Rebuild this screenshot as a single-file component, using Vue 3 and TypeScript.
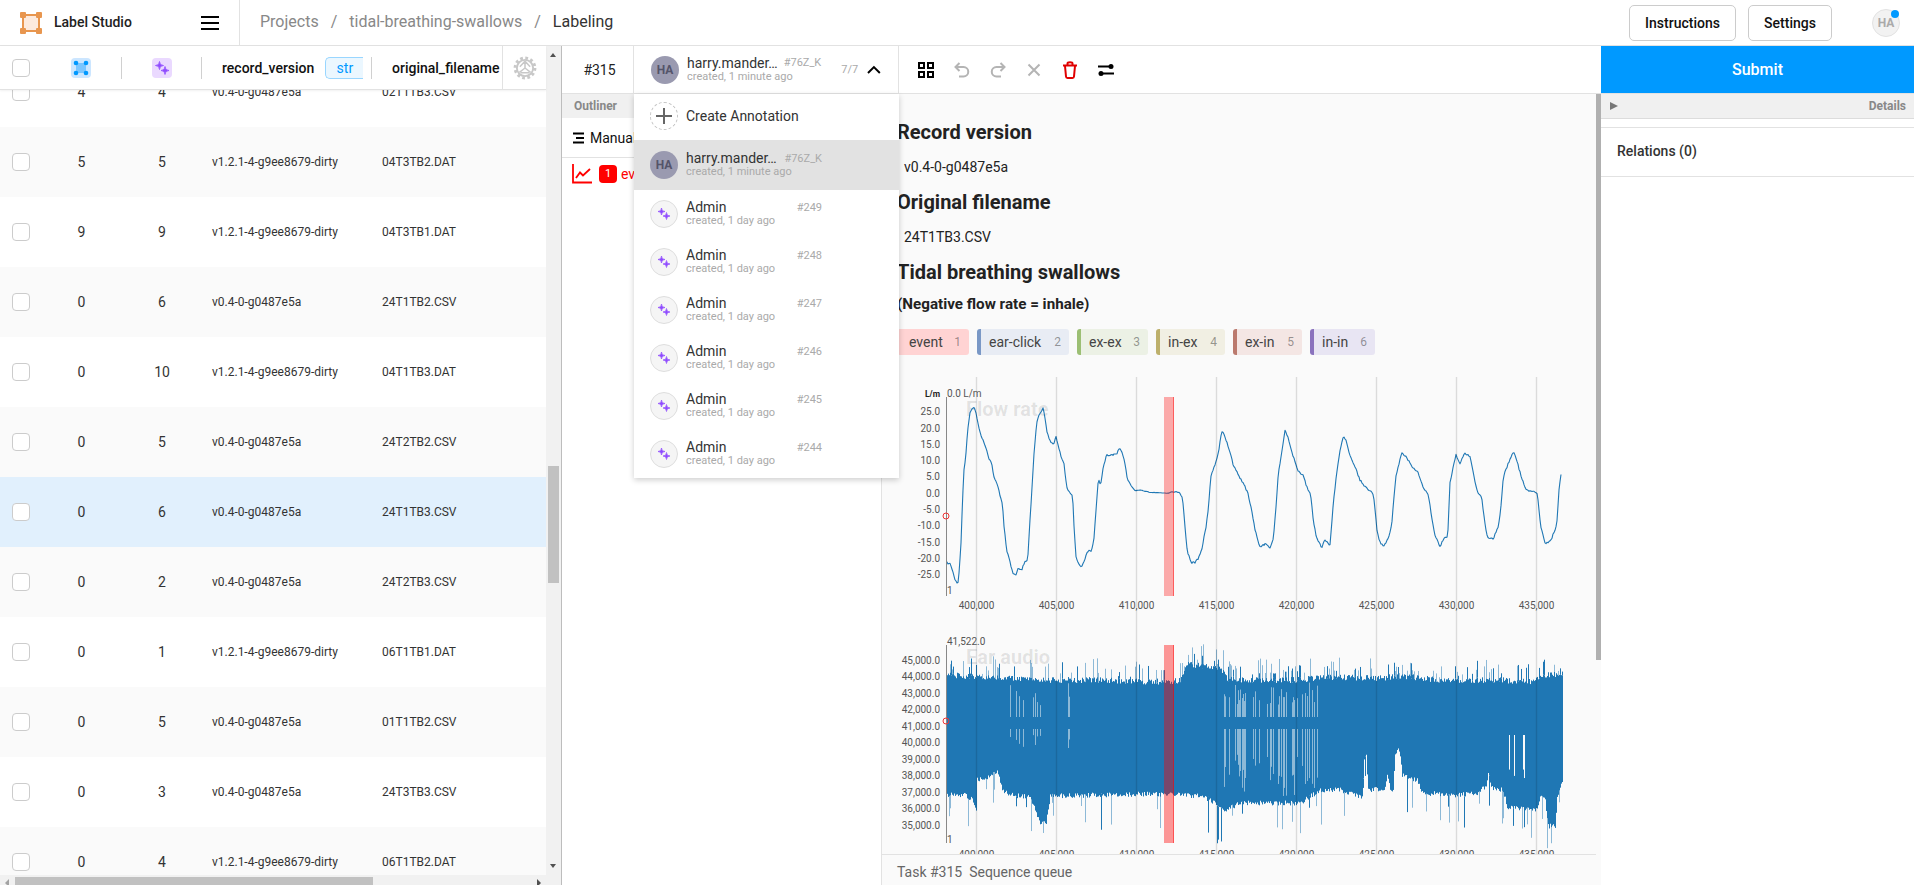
<script setup lang="ts">
type Pt = [number, number]

const rows = [
  { a: 4, b: 4, v: 'v0.4-0-g0487e5a', f: '02T1TB3.CSV' },
  { a: 5, b: 5, v: 'v1.2.1-4-g9ee8679-dirty', f: '04T3TB2.DAT' },
  { a: 9, b: 9, v: 'v1.2.1-4-g9ee8679-dirty', f: '04T3TB1.DAT' },
  { a: 0, b: 6, v: 'v0.4-0-g0487e5a', f: '24T1TB2.CSV' },
  { a: 0, b: 10, v: 'v1.2.1-4-g9ee8679-dirty', f: '04T1TB3.DAT' },
  { a: 0, b: 5, v: 'v0.4-0-g0487e5a', f: '24T2TB2.CSV' },
  { a: 0, b: 6, v: 'v0.4-0-g0487e5a', f: '24T1TB3.CSV', sel: true },
  { a: 0, b: 2, v: 'v0.4-0-g0487e5a', f: '24T2TB3.CSV' },
  { a: 0, b: 1, v: 'v1.2.1-4-g9ee8679-dirty', f: '06T1TB1.DAT' },
  { a: 0, b: 5, v: 'v0.4-0-g0487e5a', f: '01T1TB2.CSV' },
  { a: 0, b: 3, v: 'v0.4-0-g0487e5a', f: '24T3TB3.CSV' },
  { a: 0, b: 4, v: 'v1.2.1-4-g9ee8679-dirty', f: '06T1TB2.DAT' },
]
const admins = ['#249', '#248', '#247', '#246', '#245', '#244']
const chips = [
  { t: 'event', k: 1, bg: '#ffd3d3', bd: '#ffd3d3', w: 72 },
  { t: 'ear-click', k: 2, bg: '#e8ecf4', bd: '#7a98c6', w: 92 },
  { t: 'ex-ex', k: 3, bg: '#ecf1e5', bd: '#9cbf74', w: 71 },
  { t: 'in-ex', k: 4, bg: '#f1efe3', bd: '#bdb06c', w: 69 },
  { t: 'ex-in', k: 5, bg: '#f4e6e4', bd: '#bb7a6e', w: 69 },
  { t: 'in-in', k: 6, bg: '#e8e5f3', bd: '#8a72bd', w: 65 },
]

function rng(seed: number) {
  let s = seed
  return () => {
    s = (s + 0x6d2b79f5) | 0
    let t = Math.imul(s ^ (s >>> 15), 1 | s)
    t = (t + Math.imul(t ^ (t >>> 7), 61 | t)) ^ t
    return ((t ^ (t >>> 14)) >>> 0) / 4294967296
  }
}

const z5: Pt[] = [[168,578],[180,580],[186,598],[195,628],[203,645],[208,600],[213,520],[218,380],[222,300],[228,250],[232,190],[240,130],[248,112],[256,118],[262,150],[270,185],[280,215],[288,235],[295,262],[305,280],[312,320],[322,345],[330,375],[338,408],[342,470],[350,540],[358,565],[368,610],[378,612],[385,592],[395,600],[405,575],[413,570],[418,480],[425,370],[432,250],[440,160],[450,128],[460,115],[466,150],[472,190],[482,215],[492,222],[497,195],[505,230],[513,258],[522,280],[530,350],[540,370],[548,375],[552,470],[558,560],[565,582],[575,592],[585,570],[592,542],[604,545],[612,505],[618,420],[625,325],[632,345],[640,290],[650,255],[660,255],[680,252],[688,232],[697,250],[705,280],[712,325],[722,345],[735,362],[750,360],[780,367],[810,368],[835,370],[845,365],[870,368],[878,385],[884,460],[892,545],[905,578],[915,578],[925,565],[935,540],[948,470],[955,420],[962,320],[975,285],[985,250],[995,182],[1005,200],[1015,230],[1030,285],[1045,315],[1065,350],[1075,375],[1085,420],[1095,480],[1110,532],[1125,522],[1140,532],[1150,505],[1158,410],[1165,310],[1175,250],[1185,180],[1195,205],[1205,245],[1225,305],[1240,315],[1250,350],[1262,375],[1270,450],[1280,505],[1295,533],[1305,510],[1320,525],[1330,400],[1340,310],[1350,240],[1360,198],[1368,210],[1378,250],[1395,290],[1410,330],[1425,350],[1450,372]]
const z9: Pt[] = [[225,420],[232,490],[240,517],[252,527],[265,505],[275,465],[282,380],[288,320],[296,285],[305,250],[318,258],[335,290],[355,310],[368,350],[385,372],[395,440],[405,495],[420,530],[432,505],[443,500],[450,340],[458,300],[468,255],[480,280],[493,248],[510,258],[520,310],[532,365],[545,380],[552,440],[562,503],[580,505],[595,470],[602,420],[610,320],[625,280],[640,245],[650,270],[665,325],[680,362],[712,368],[722,470],[735,518],[745,520],[755,505],[770,465],[777,360],[785,300]]

const flowPts: Pt[] = [
  ...z5.map(([x, y]): Pt => [890 + x / 3, 370 + y / 3]),
  ...z9.map(([x, y]): Pt => [1300 + x / 3, 370 + y / 3]),
]

function lerp(pts: Pt[], x: number) {
  for (let i = 1; i < pts.length; i++) {
    if (x <= pts[i][0]) {
      const [x0, y0] = pts[i - 1]
      const [x1, y1] = pts[i]
      return y0 + ((y1 - y0) * (x - x0)) / Math.max(x1 - x0, 0.001)
    }
  }
  return pts[pts.length - 1][1]
}

const flowPath = (() => {
  const r = rng(7)
  let d = ''
  for (let x = 946; x <= 1561.7; x += 1) {
    const amp = x > 1130 && x < 1176 ? 0.5 : 1.9
    const y = lerp(flowPts, x) + (r() - 0.5) * amp
    d += `${d ? 'L' : 'M'}${x.toFixed(2)} ${y.toFixed(2)}`
  }
  return d
})()

const topEnv: Pt[] = [[946,675],[1000,678],[1050,680],[1100,680],[1160,682],[1175,682],[1180,680],[1188,664],[1200,666],[1220,668],[1226,678],[1240,680],[1300,680],[1320,677],[1380,678],[1400,676],[1440,680],[1500,680],[1530,682],[1545,675],[1562,674]]
const botEnv: Pt[] = [[946,795],[965,795],[972,800],[976,812],[977,780],[990,776],[998,772],[1002,790],[1010,795],[1030,797],[1035,810],[1040,822],[1046,822],[1050,796],[1150,794],[1200,796],[1210,800],[1225,810],[1240,803],[1300,803],[1320,790],[1340,790],[1350,794],[1362,797],[1364,757],[1366,757],[1368,790],[1385,788],[1387,773],[1390,790],[1393,792],[1395,753],[1399,750],[1402,775],[1417,780],[1422,793],[1455,795],[1478,793],[1486,785],[1488,773],[1491,788],[1503,790],[1507,808],[1527,808],[1537,810],[1541,795],[1545,800],[1548,826],[1555,826],[1557,795],[1562,783]]

const audio = (() => {
  const r = rng(42)
  let solid = ''
  let soft = ''
  for (let x = 946; x <= 1562; x++) {
    const px = x + 0.5
    const top = lerp(topEnv, x) + (r() - 0.5) * 6
    const bot = lerp(botEnv, x) + (r() - 0.5) * 5
    const spikeT = r()
    if (spikeT < 0.16) soft += `M${px} ${top - 4 - r() * 16}V${top}`
    else if (spikeT < 0.26) solid += `M${px} ${top - 3 - r() * 14}V${top}`
    const spikeB = r()
    if (spikeB < 0.07) soft += `M${px} ${bot}V${bot + 8 + r() * 26}`
    else if (spikeB < 0.12) solid += `M${px} ${bot}V${bot + 8 + r() * 30}`
    const inA = x > 1000 && x < 1042
    const inB = x > 1060 && x < 1074
    const inC = x > 1222 && x < 1320
    const inD = x > 1507 && x < 1532
    const g = r()
    if ((inA && g < 0.1) || (inB && g < 0.14) || (inC && g < 0.3)) {
      const upEnd = top + 4 + r() * 20
      const lowEnd = inC ? bot - 8 - r() * 40 : 735 + r() * 20
      solid += `M${px} ${top}V${upEnd}M${px} 717V729M${px} ${lowEnd}V${bot}`
      soft += `M${px} ${upEnd}V717M${px} 729V${lowEnd}`
    } else if (inD && g < 0.12) {
      solid += `M${px} ${top}V735M${px} ${760 + r() * 20}V${bot}`
    } else {
      solid += `M${px} ${top}V${bot}`
    }
  }
  return { solid, soft }
})()

const flowTicks = [25, 20, 15, 10, 5, 0, -5, -10, -15, -20, -25].map((v) => ({
  y: 411.7 + (25 - v) * 3.26,
  t: v.toFixed(1),
}))
const audioTicks = [45, 44, 43, 42, 41, 40, 39, 38, 37, 36, 35].map((v) => ({
  y: 660 + (45 - v) * 16.5,
  t: `${v},000.0`,
}))
const grid = [0, 1, 2, 3, 4, 5, 6, 7].map((i) => ({
  x: 976.5 + 80 * i,
  t: `${400 + 5 * i},000`,
}))
</script>

<template>
  <div class="app">
    <header class="topnav">
      <div class="brand">
        <svg class="logo" width="22" height="22" viewBox="0 0 22 22">
          <rect x="3" y="3" width="16" height="16" fill="#fdeadd" stroke="#e8964f" stroke-width="2" />
          <rect x="0" y="0" width="6" height="6" rx="1" fill="#e8964f" />
          <rect x="16" y="0" width="6" height="6" rx="1" fill="#e8964f" />
          <rect x="0" y="16" width="6" height="6" rx="1" fill="#e8964f" />
          <rect x="16" y="16" width="6" height="6" rx="1" fill="#e8964f" />
        </svg>
        <span class="brand-name">Label Studio</span>
        <svg class="burger" width="18" height="14" viewBox="0 0 18 14">
          <path d="M0 1h18M0 7h18M0 13h18" stroke="#000" stroke-width="2" />
        </svg>
      </div>
      <nav class="crumbs">
        <span>Projects</span><i>/</i><span>tidal-breathing-swallows</span><i>/</i><span class="cur">Labeling</span>
      </nav>
      <div class="nav-right">
        <button class="btn btn-ins">Instructions</button>
        <button class="btn btn-set">Settings</button>
        <div class="me">HA<b class="dot"></b></div>
      </div>
    </header>

    <div class="body">
      <section class="table-pane">
        <div class="table-col">
          <div class="thead">
            <div class="tc"><span class="check"></span></div>
            <div class="tc sep center">
              <svg width="20" height="20" viewBox="0 0 20 20">
                <rect width="20" height="20" rx="4" fill="#cce6ff" />
                <rect x="5" y="5" width="10" height="10" fill="#7cc6ff" />
                <circle cx="5" cy="5" r="2.3" fill="#0099ff" /><circle cx="15" cy="5" r="2.3" fill="#0099ff" />
                <circle cx="5" cy="15" r="2.3" fill="#0099ff" /><circle cx="15" cy="15" r="2.3" fill="#0099ff" />
              </svg>
            </div>
            <div class="tc sep center">
              <svg width="20" height="20" viewBox="0 0 20 20">
                <rect width="20" height="20" rx="4" fill="#ead9ff" />
                <path d="M7.5 3.5Q7.5 7.5 11.5 7.5Q7.5 7.5 7.5 11.5Q7.5 7.5 3.5 7.5Q7.5 7.5 7.5 3.5Z" fill="#8f4bff" stroke="#8f4bff" stroke-width=".8" />
                <path d="M13 8.5Q13 12.5 17 12.5Q13 12.5 13 16.5Q13 12.5 9 12.5Q13 12.5 13 8.5Z" fill="#8f4bff" stroke="#8f4bff" stroke-width=".8" />
              </svg>
            </div>
            <div class="tc sep name-cell">
              <span class="colname">record_version</span>
              <span class="str">str</span>
            </div>
            <div class="tc name-cell"><span class="colname">original_filename</span></div>
            <div class="tc gear-cell">
              <svg width="24" height="24" viewBox="0 0 28 28" fill="none" stroke="#c8c8c8">
                <circle cx="14" cy="14" r="11.500" stroke-width="3.6" stroke-dasharray="3.200 2.820" />
                <circle cx="14" cy="14" r="9.500" stroke-width="2.200" />
                <path d="M14 6L14 14M14 14L7.500 19M14 14L20.500 19M8 12.500L14 6L20 12.500M9 19.500h10" stroke-width="1.800" />
              </svg>
            </div>
          </div>
          <div class="rows-view">
            <div class="rows">
              <div
                v-for="(r, i) in rows"
                :key="i"
                class="row"
                :class="{ alt: i % 2 === 1, sel: r.sel }"
              >
                <div class="tc"><span class="check"></span></div>
                <div class="num">{{ r.a }}</div>
                <div class="num">{{ r.b }}</div>
                <div class="txt">{{ r.v }}</div>
                <div class="txt">{{ r.f }}</div>
              </div>
            </div>
          </div>
          <div class="hscroll">
            <i class="arr-l"></i>
            <b class="hthumb"></b>
            <i class="arr-r"></i>
          </div>
        </div>
        <div class="vscroll">
          <i class="arr-u"></i>
          <b class="vthumb"></b>
          <i class="arr-d"></i>
        </div>
      </section>

      <section class="lab">
        <div class="lab-top">
          <div class="task-id">#315</div>
          <div class="annot">
            <div class="ava ha">HA</div>
            <div class="who">
              <div class="who-line">
                <span class="nm">harry.mander…</span>
                <span class="idn">#76Z_K</span>
              </div>
              <div class="ago">created, 1 minute ago</div>
            </div>
            <span class="count">7/7</span>
            <svg width="14" height="9" viewBox="0 0 14 9">
              <path d="M1 8L7 2L13 8" fill="none" stroke="#000" stroke-width="2" />
            </svg>
          </div>
          <div class="tools">
            <svg width="16" height="16" viewBox="0 0 16 16" fill="none" stroke="#000" stroke-width="2">
              <rect x="1" y="1" width="5" height="5" /><rect x="10" y="1" width="5" height="5" />
              <rect x="1" y="10" width="5" height="5" /><rect x="10" y="10" width="5" height="5" />
            </svg>
            <svg width="16" height="16" viewBox="0 0 16 16" fill="none" stroke="#b4b4b4" stroke-width="2">
              <path d="M5.500 1L1.500 5L5.500 9M2 5H9.500a4.600 4.600 0 0 1 0 9.500H5" />
            </svg>
            <svg width="16" height="16" viewBox="0 0 16 16" fill="none" stroke="#b4b4b4" stroke-width="2">
              <path d="M10.500 1L14.500 5L10.500 9M14 5H6.500a4.600 4.600 0 0 0 0 9.500H11" />
            </svg>
            <svg width="16" height="16" viewBox="0 0 16 16" fill="none" stroke="#b4b4b4" stroke-width="2">
              <path d="M2.500 2.500L13.500 13.500M13.500 2.500L2.500 13.500" />
            </svg>
            <svg width="16" height="18" viewBox="0 0 16 18" fill="none" stroke="#e00000" stroke-width="2">
              <path d="M1 4.500H15M5.500 4.500V2.500Q5.500 1.200 8 1.200Q10.500 1.200 10.500 2.500V4.500M3 5L4 15.500Q4.100 17 5.500 17H10.500Q11.900 17 12 15.500L13 5" />
            </svg>
            <svg width="16" height="16" viewBox="0 0 16 16">
              <path d="M0 4.500H13M3 11.500H16" stroke="#000" stroke-width="2" />
              <circle cx="13" cy="4.500" r="2.500" /><circle cx="3" cy="11.500" r="2.500" />
            </svg>
          </div>
          <button class="submit">Submit</button>
        </div>

        <div class="work">
          <div class="outliner">
            <div class="tab">Outliner</div>
            <div class="manual">
              <svg width="11" height="12" viewBox="0 0 11 12">
                <path d="M0 1.500H11M3 6H11M0 10.500H11" stroke="#000" stroke-width="2" />
              </svg>
              <span>Manual</span>
            </div>
            <div class="region">
              <svg width="20" height="20" viewBox="0 0 20 20" fill="none" stroke="#ff0000" stroke-width="1.800">
                <path d="M1 0V18.500H20" />
                <path d="M4 14L8 8.500L11 11.500L18 5" />
              </svg>
              <span class="reg-badge">1</span>
              <span class="reg-name">event</span>
            </div>
          </div>

          <div class="content">
            <div class="doc">
              <h2 class="h">Record version</h2>
              <p class="val">v0.4-0-g0487e5a</p>
              <h2 class="h">Original filename</h2>
              <p class="val">24T1TB3.CSV</p>
              <h2 class="h">Tidal breathing swallows</h2>
              <h3 class="sub">(Negative flow rate = inhale)</h3>
              <div class="chips">
                <span
                  v-for="c in chips"
                  :key="c.k"
                  class="chip"
                  :style="{ background: c.bg, borderLeftColor: c.bd, width: c.w + 'px' }"
                >{{ c.t }}<em>{{ c.k }}</em></span>
              </div>
            </div>
            <svg class="plot" width="714" height="482" viewBox="882 372 714 482">
              <text x="966" y="416" class="wm">Flow rate</text>
              <text x="966" y="664" class="wm">Ear audio</text>

              <path :d="flowPath" fill="none" stroke="#1f77b4" stroke-width="1.100" stroke-linejoin="round" />
              <path :d="audio.soft" stroke="#1f77b4" stroke-opacity=".5" fill="none" />
              <path :d="audio.solid" stroke="#1f77b4" fill="none" />

              <line v-for="g in grid" :key="g.x" :x1="g.x" :x2="g.x" y1="377" y2="854" stroke="#000" stroke-opacity=".12" stroke-width="1.400" />

              <path d="M946.500 397V596M946.500 645V843" stroke="#888" fill="none" />
              <text x="925" y="397" class="unit">L/m</text>
              <text x="947" y="397" class="tick">0.0 L/m</text>
              <text x="947" y="594" class="tick">1</text>
              <text x="947" y="645" class="tick">41,522.0</text>
              <text x="947" y="843" class="tick">1</text>

              <text v-for="t in flowTicks" :key="t.t" x="940" :y="t.y + 3.500" class="tick end">{{ t.t }}</text>
              <text v-for="t in audioTicks" :key="t.t" x="940" :y="t.y + 3.500" class="tick end">{{ t.t }}</text>
              <template v-for="g in grid" :key="g.t">
                <text :x="g.x" y="609" class="tick mid">{{ g.t }}</text>
                <text :x="g.x" y="858" class="tick mid">{{ g.t }}</text>
              </template>

              <rect x="1164" y="397" width="10" height="199" fill="#ff0000" fill-opacity=".32" />
              <rect x="1164" y="645" width="10" height="198" fill="#ff0000" fill-opacity=".4" />
              <path d="M1173.500 397V596M1173.500 645V843" stroke="#ff0000" stroke-opacity=".45" fill="none" />
              <circle cx="946" cy="516" r="3" fill="none" stroke="#e33" />
              <circle cx="946" cy="721" r="3" fill="none" stroke="#e33" />
            </svg>
            <div class="foot">Task #315&nbsp; Sequence queue</div>
            <b class="content-thumb"></b>
          </div>

          <aside class="side">
            <div class="side-tab">
              <i class="tri"></i>
              <span>Details</span>
            </div>
            <div class="side-gap"></div>
            <div class="rel">Relations (0)</div>
          </aside>

          <div class="dropdown">
            <div class="dd-create">
              <div class="ava plus">
                <svg width="16" height="16" viewBox="0 0 16 16">
                  <path d="M8 0V16M0 8H16" stroke="#666" stroke-width="2" />
                </svg>
              </div>
              <span class="nm">Create Annotation</span>
            </div>
            <div class="dd-item dd-sel">
              <div class="ava ha">HA</div>
              <div class="who">
                <div class="who-line">
                  <span class="nm">harry.mander…</span>
                  <span class="idn">#76Z_K</span>
                </div>
                <div class="ago">created, 1 minute ago</div>
              </div>
            </div>
            <div v-for="a in admins" :key="a" class="dd-item">
              <div class="ava bot">
                <svg width="14" height="14" viewBox="0 0 14 14" fill="#8f4bff" stroke="#8f4bff" stroke-width=".7">
                  <path d="M4.500 1Q4.500 4.500 8 4.500Q4.500 4.500 4.500 8Q4.500 4.500 1 4.500Q4.500 4.500 4.500 1Z" />
                  <path d="M9.500 5.500Q9.500 9 13 9Q9.500 9 9.500 12.500Q9.500 9 6 9Q9.500 9 9.500 5.500Z" />
                </svg>
              </div>
              <div class="who">
                <div class="who-line">
                  <span class="nm">Admin</span>
                  <span class="idn">{{ a }}</span>
                </div>
                <div class="ago">created, 1 day ago</div>
              </div>
            </div>
          </div>
        </div>
      </section>
    </div>
  </div>
</template>

<style>
html,
body {
  margin: 0;
  background: #fff;
  overflow: hidden;
}
</style>

<style scoped>
.app {
  width: 1914px;
  height: 885px;
  display: flex;
  flex-direction: column;
  overflow: hidden;
  font-family: Roboto, "Liberation Sans", sans-serif;
  color: #222;
  font-size: 14px;
}
.topnav {
  height: 45px;
  flex: none;
  display: flex;
  align-items: center;
  border-bottom: 1px solid #e2e2e2;
  box-sizing: content-box;
}
.brand {
  width: 240px;
  height: 45px;
  flex: none;
  display: flex;
  align-items: center;
  padding-left: 20px;
  box-sizing: border-box;
  border-right: 1px solid #e2e2e2;
}
.brand-name {
  margin-left: 12px;
  margin-top: -1px;
  font-size: 14px;
  font-weight: 500;
  color: #222;
  width: 60px;
  white-space: nowrap;
  flex: 1;
}
.burger {
  margin-right: 20px;
}
.crumbs {
  margin-left: 20px;
  padding-bottom: 2px;
  display: flex;
  align-items: center;
  font-size: 16px;
  color: #888;
  white-space: nowrap;
}
.crumbs i {
  font-style: normal;
  margin: 0 12px;
}
.crumbs .cur {
  color: #333;
}
.nav-right {
  margin-left: auto;
  display: flex;
  align-items: center;
}
.btn {
  height: 36px;
  background: #fff;
  border: 1px solid #ccc;
  border-radius: 5px;
  font: 500 14px Roboto, sans-serif;
  color: #111;
  padding: 0;
}
.btn-ins {
  width: 107px;
}
.btn-set {
  width: 84px;
  margin-left: 12px;
}
.me {
  position: relative;
  width: 28px;
  height: 28px;
  margin: 0 14px 0 40px;
  border-radius: 50%;
  background: #f2f2f2;
  border: 1px solid #e2e2e2;
  box-sizing: border-box;
  display: flex;
  align-items: center;
  justify-content: center;
  font-size: 12px;
  font-weight: 700;
  color: #aaa;
}
.dot {
  position: absolute;
  width: 8px;
  height: 8px;
  border-radius: 50%;
  background: #0099ff;
  top: 0;
  right: 0;
}
.body {
  flex: 1;
  display: flex;
  min-height: 0;
}
.table-pane {
  width: 562px;
  flex: none;
  display: flex;
  border-right: 1px solid #bdbdbd;
  box-sizing: border-box;
}
.table-col {
  width: 546px;
  flex: none;
  display: flex;
  flex-direction: column;
}
.thead {
  height: 44px;
  flex: none;
  display: grid;
  grid-template-columns: 41px 81px 80px 170px 130px 44px;
  background: #fff;
  border-bottom: 1px solid #e2e2e2;
  box-sizing: border-box;
  box-shadow: 0 1px 2px rgba(0, 0, 0, 0.06);
  position: relative;
  z-index: 2;
  align-items: center;
}
.tc {
  display: flex;
  align-items: center;
  min-width: 0;
}
.check {
  width: 18px;
  height: 18px;
  margin-left: 12px;
  box-sizing: border-box;
  border: 1px solid #ccc;
  border-radius: 4px;
  background: #fff;
  flex: none;
}
.sep {
  height: 22px;
  border-right: 1px solid #d0d0d0;
}
.center {
  justify-content: center;
}
.name-cell {
  padding-left: 20px;
  overflow: hidden;
  white-space: nowrap;
  height: 22px;
}
.colname {
  font-size: 14px;
  font-weight: 500;
  color: #111;
  flex: none;
}
.str {
  margin-left: 11px;
  height: 22px;
  width: 38px;
  flex: none;
  box-sizing: border-box;
  border: 1px solid #99d6ff;
  border-right: none;
  border-radius: 5px 0 0 5px;
  background: #ebf7ff;
  color: #0099ff;
  text-align: center;
  line-height: 20px;
  font-size: 14px;
}
.gear-cell {
  height: 43px;
  justify-content: center;
  border-left: 1px solid #e2e2e2;
}
.rows-view {
  flex: 1;
  min-height: 0;
  overflow: hidden;
}
.rows {
  margin-top: -33px;
}
.row {
  height: 70px;
  display: grid;
  grid-template-columns: 41px 81px 80px 170px 1fr;
  align-items: center;
  background: #fff;
}
.row.alt {
  background: #fafafa;
}
.row.sel {
  background: #e1f0fd;
}
.num {
  text-align: center;
  font-size: 14px;
  color: #333;
}
.txt {
  padding-left: 10px;
  font-size: 12px;
  color: #333;
  white-space: nowrap;
}
.hscroll {
  height: 10px;
  flex: none;
  background: #f1f1f1;
  position: relative;
}
.hthumb {
  position: absolute;
  left: 15px;
  top: 2px;
  width: 358px;
  height: 8px;
  background: #c1c1c1;
}
.arr-l,
.arr-r {
  position: absolute;
  top: 4px;
  width: 0;
  height: 0;
  border-top: 4px solid transparent;
  border-bottom: 4px solid transparent;
}
.arr-l {
  left: 5px;
  border-right: 4px solid #a3a3a3;
}
.arr-r {
  right: 5px;
  border-left: 4px solid #505050;
}
.vscroll {
  width: 15px;
  flex: none;
  background: #f1f1f1;
  position: relative;
}
.vthumb {
  position: absolute;
  left: 2px;
  width: 11px;
  top: 420px;
  height: 117px;
  background: #c1c1c1;
}
.arr-u,
.arr-d {
  position: absolute;
  left: 4px;
  width: 0;
  height: 0;
  border-left: 3.5px solid transparent;
  border-right: 3.5px solid transparent;
}
.arr-u {
  top: 7px;
  border-bottom: 4px solid #505050;
}
.arr-d {
  bottom: 17px;
  border-top: 4px solid #505050;
}
.lab {
  flex: 1;
  min-width: 0;
  display: flex;
  flex-direction: column;
}
.lab-top {
  height: 48px;
  flex: none;
  display: flex;
  border-bottom: 1px solid #e2e2e2;
  box-sizing: border-box;
}
.task-id {
  width: 72px;
  flex: none;
  display: flex;
  align-items: center;
  justify-content: center;
  font-size: 14px;
  color: #222;
  border-right: 1px solid #e2e2e2;
  box-sizing: border-box;
  padding-left: 4px;
}
.annot {
  width: 265px;
  flex: none;
  display: flex;
  align-items: center;
  padding-left: 17px;
  padding-right: 17px;
  box-sizing: border-box;
  border-right: 1px solid #e2e2e2;
}
.annot .who {
  width: 136px;
}
.count {
  margin-left: 20px;
  margin-right: 9px;
  font-size: 11px;
  color: #aaa;
}
.ava {
  width: 28px;
  height: 28px;
  border-radius: 50%;
  flex: none;
  display: flex;
  align-items: center;
  justify-content: center;
  box-sizing: border-box;
  margin-right: 8px;
}
.ha {
  background: #9a9ab0;
  color: #54546a;
  font-size: 12px;
  font-weight: 700;
}
.bot {
  background: #f5f5f5;
  border: 1px solid #dedede;
}
.plus {
  border: 1px dashed #c4c4c4;
}
.who-line {
  display: flex;
  justify-content: space-between;
  align-items: center;
  height: 14px;
}
.nm {
  font-size: 14px;
  line-height: 14px;
  color: #333;
}
.idn {
  font-size: 11px;
  color: #aaa;
}
.ago {
  font-size: 11px;
  line-height: 14px;
  color: #aaa;
}
.tools {
  flex: 1;
  display: flex;
  align-items: center;
  padding-left: 19px;
  gap: 20px;
}
.submit {
  width: 313px;
  flex: none;
  background: #0099ff;
  color: #fff;
  border: none;
  font: 500 16px Roboto, sans-serif;
  padding: 0;
}
.work {
  flex: 1;
  min-height: 0;
  display: flex;
  position: relative;
}
.outliner {
  width: 320px;
  flex: none;
  border-right: 1px solid #e2e2e2;
  box-sizing: border-box;
  overflow: hidden;
}
.tab {
  height: 24px;
  background: #f0f0f0;
  font-size: 12px;
  font-weight: 700;
  color: #888;
  line-height: 24px;
  padding-left: 12px;
}
.manual {
  height: 40px;
  display: flex;
  align-items: center;
  padding-left: 11px;
  gap: 6px;
  border-bottom: 1px solid #e2e2e2;
  box-sizing: border-box;
  color: #111;
}
.region {
  display: flex;
  align-items: center;
  padding: 6px 0 0 10px;
  color: #ff0000;
}
.reg-badge {
  margin-left: 7px;
  width: 18px;
  height: 18px;
  border-radius: 4px;
  background: #ff0000;
  color: #fff;
  font-size: 11px;
  text-align: center;
  line-height: 18px;
}
.reg-name {
  margin-left: 4px;
}
.content {
  width: 719px;
  flex: none;
  background: #fafafa;
  display: flex;
  flex-direction: column;
  position: relative;
  overflow: hidden;
}
.doc {
  padding: 23px 0 0 15px;
  height: 278px;
  box-sizing: border-box;
  flex: none;
}
.h {
  margin: 0;
  font-size: 20px;
  line-height: 30px;
  font-weight: 700;
  color: #222;
}
.val {
  margin: 9px 0;
  padding-left: 7px;
  font-size: 14px;
  line-height: 22px;
  color: #222;
}
.sub {
  margin: 6px 0 0;
  font-size: 15.2px;
  line-height: 22px;
  font-weight: 700;
  color: #222;
}
.chips {
  display: flex;
  gap: 8px;
  margin-top: 14px;
}
.chip {
  height: 26px;
  box-sizing: border-box;
  flex: none;
  display: inline-flex;
  align-items: center;
  justify-content: space-between;
  padding: 0 8px 0 8px;
  border-left: 4px solid;
  border-radius: 3px;
  font-size: 14px;
  color: #444;
}
.chip em {
  font-style: normal;
  font-size: 12px;
  color: rgba(0, 0, 0, 0.4);
}
.plot {
  display: block;
  width: 714px;
  height: 482px;
  flex: none;
}
.wm {
  font: 700 20px Roboto, sans-serif;
  fill: #000;
  fill-opacity: 0.1;
}
.unit {
  font: 700 8.5px Roboto, sans-serif;
  fill: #222;
}
.tick {
  font: 400 10px Roboto, sans-serif;
  fill: #555;
}
.end {
  text-anchor: end;
}
.mid {
  text-anchor: middle;
}
.foot {
  flex: 1;
  border-top: 1px solid #e2e2e2;
  margin-right: 5px;
  padding-left: 15px;
  font-size: 14px;
  line-height: 34px;
  color: #666;
  white-space: nowrap;
  background: #fafafa;
  position: relative;
  z-index: 1;
}
.content-thumb {
  position: absolute;
  right: 0;
  top: 0;
  width: 5px;
  height: 566px;
  background: #b0b0b0;
}
.side {
  flex: 1;
  min-width: 0;
  background: #fff;
}
.side-tab {
  height: 25px;
  background: #f0f0f0;
  border-bottom: 1px solid #dcdcdc;
  box-sizing: border-box;
  display: flex;
  align-items: center;
  justify-content: space-between;
  padding: 0 8px 0 9px;
  font-size: 12px;
  font-weight: 700;
  color: #888;
}
.tri {
  width: 0;
  height: 0;
  border-left: 8px solid #777;
  border-top: 4.5px solid transparent;
  border-bottom: 4.5px solid transparent;
}
.side-gap {
  height: 9px;
  box-sizing: border-box;
  border-bottom: 1px solid #e2e2e2;
}
.rel {
  height: 49px;
  box-sizing: border-box;
  border-bottom: 1px solid #e2e2e2;
  line-height: 46px;
  padding-left: 16px;
  font-weight: 500;
  color: #333;
}
.dropdown {
  position: absolute;
  left: 72px;
  top: 0;
  width: 265px;
  background: #fff;
  box-shadow: 0 2px 6px rgba(0, 0, 0, 0.2);
  z-index: 5;
}
.dd-create {
  height: 46px;
  display: flex;
  align-items: center;
  box-sizing: border-box;
  padding: 0 0 2px 16px;
}
.dd-item {
  height: 48px;
  display: flex;
  align-items: center;
  padding: 0 77px 0 16px;
}
.dd-item .who {
  flex: 1;
  min-width: 0;
}
.dd-sel {
  height: 50px;
  background: #e2e2e2;
}
</style>
